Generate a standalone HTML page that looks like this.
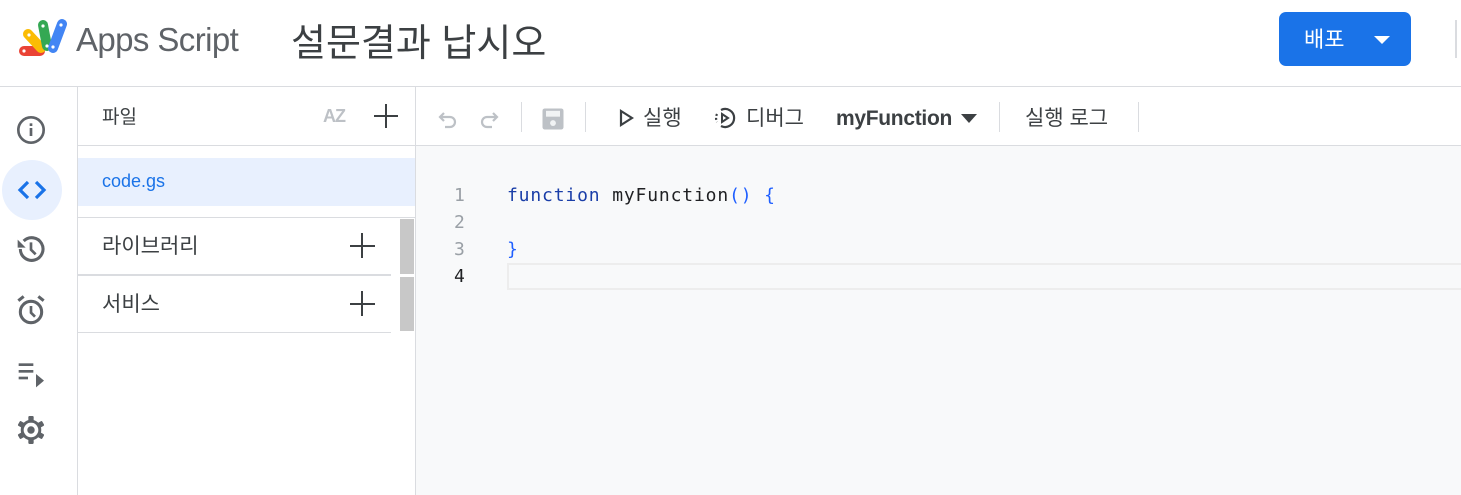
<!DOCTYPE html>
<html><head><meta charset="utf-8"><style>
*{margin:0;padding:0;box-sizing:border-box}
body{width:1461px;height:495px;overflow:hidden;background:#fff;font-family:"Liberation Sans","Noto Sans CJK KR",sans-serif;color:#3c4043;position:relative}
.a{position:absolute}
.k{font-family:"Liberation Sans","Noto Sans CJK KR",sans-serif}
.m{font-family:"DejaVu Sans Mono","Liberation Mono",monospace;font-size:18px;letter-spacing:0.85px}
</style></head><body>
<svg class="a" style="left:18px;top:18px" width="50" height="40" viewBox="0 0 50 40">
<g stroke-linecap="round" stroke-width="10">
<line x1="6" y1="33" x2="22" y2="33" stroke="#ea4335"/>
<line x1="10" y1="16" x2="23" y2="30" stroke="#fbbc04"/>
<line x1="25" y1="7" x2="29" y2="28" stroke="#34a853"/>
<line x1="44" y1="6" x2="35" y2="30" stroke="#4285f4"/>
</g>
<g fill="#fff"><circle cx="6" cy="33" r="1.6"/><circle cx="11" cy="17" r="1.6"/><circle cx="25" cy="8" r="1.6"/><circle cx="43" cy="7" r="1.6"/><circle cx="35" cy="29" r="1.6"/><circle cx="29" cy="28" r="1.6"/></g>
</svg>
<div class="a" style="left:76px;top:21px;font-size:33px;color:#5f6368;letter-spacing:-0.6px">Apps Script</div>
<div class="a k" style="left:291px;top:12px;font-size:38px;color:#3c4043">설문결과 납시오</div>
<div class="a" style="left:1279px;top:12px;width:132px;height:54px;background:#1a73e8;border-radius:7px"></div>
<div class="a k" style="left:1304px;top:22px;font-size:22px;color:#fff">배포</div>
<div class="a" style="left:1374px;top:36px;width:0;height:0;border-left:8px solid transparent;border-right:8px solid transparent;border-top:8px solid #fff"></div>
<div class="a" style="left:1455px;top:20px;width:2px;height:38px;background:#dadce0"></div>
<div class="a" style="left:0;top:86px;width:1461px;height:1px;background:#dadce0"></div>
<div class="a" style="left:77px;top:87px;width:1px;height:408px;background:#dadce0"></div>
<svg class="a" style="left:15px;top:114px" width="32" height="32" viewBox="0 0 24 24"><circle cx="12" cy="12" r="9.5" fill="none" stroke="#5f6368" stroke-width="2"/><rect x="11" y="10.5" width="2" height="6" fill="#5f6368"/><rect x="11" y="7" width="2" height="2" fill="#5f6368"/></svg>
<div class="a" style="left:2px;top:160px;width:60px;height:60px;border-radius:50%;background:#e8f0fe"></div>
<svg class="a" style="left:15px;top:174px" width="34" height="32" viewBox="0 0 24 24"><path d="M9 6 L3 12 L9 18 M15 6 L21 12 L15 18" fill="none" stroke="#1a73e8" stroke-width="2.4"/></svg>
<svg class="a" style="left:15px;top:233px" width="32" height="32" viewBox="0 0 24 24"><path d="M4 12 A8.5 8.5 0 1 0 6.5 6" fill="none" stroke="#5f6368" stroke-width="2.3"/><path d="M2 5 L2 11 L8 11" fill="#5f6368"/><path d="M12 7 V12.5 L15.5 16" fill="none" stroke="#5f6368" stroke-width="2"/></svg>
<svg class="a" style="left:15px;top:294px" width="32" height="32" viewBox="0 0 24 24"><circle cx="12" cy="13.5" r="8" fill="none" stroke="#5f6368" stroke-width="2.3"/><path d="M2.5 5 L6.5 1.8 M21.5 5 L17.5 1.8" stroke="#5f6368" stroke-width="2.3"/><path d="M12 9 V14 L15 17" fill="none" stroke="#5f6368" stroke-width="2"/></svg>
<svg class="a" style="left:15px;top:358px" width="34" height="32" viewBox="0 0 24 24"><rect x="2" y="4" width="11" height="2" fill="#5f6368"/><rect x="2" y="9" width="11" height="2" fill="#5f6368"/><rect x="2" y="14" width="7" height="2" fill="#5f6368"/><path d="M15 12 L21 17 L15 22 Z" fill="#5f6368"/></svg>
<svg class="a" style="left:15px;top:414px" width="32" height="32" viewBox="0 0 24 24"><g fill="#5f6368"><rect x="10" y="1.5" width="4" height="5" rx="0.8"/><rect x="10" y="1.5" width="4" height="5" rx="0.8" transform="rotate(60 12 12)"/><rect x="10" y="1.5" width="4" height="5" rx="0.8" transform="rotate(120 12 12)"/><rect x="10" y="1.5" width="4" height="5" rx="0.8" transform="rotate(180 12 12)"/><rect x="10" y="1.5" width="4" height="5" rx="0.8" transform="rotate(240 12 12)"/><rect x="10" y="1.5" width="4" height="5" rx="0.8" transform="rotate(300 12 12)"/></g><circle cx="12" cy="12" r="6.6" fill="none" stroke="#5f6368" stroke-width="2.2"/><circle cx="12" cy="12" r="2.8" fill="#5f6368"/></svg>
<div class="a k" style="left:102px;top:102px;font-size:19px">파일</div>
<div class="a" style="left:323px;top:106px;font-size:18px;font-weight:bold;color:#bdc1c6;letter-spacing:-1px">AZ</div>
<div class="a" style="left:374px;top:115px;width:24px;height:2.4px;background:#3c4043"></div>
<div class="a" style="left:385px;top:104px;width:2.4px;height:24px;background:#3c4043"></div>
<div class="a" style="left:78px;top:145px;width:337px;height:1px;background:#dadce0"></div>
<div class="a" style="left:78px;top:158px;width:337px;height:48px;background:#e8f0fe"></div>
<div class="a" style="left:102px;top:171px;font-size:18px;color:#1a73e8">code.gs</div>
<div class="a" style="left:78px;top:217px;width:337px;height:1px;background:#dadce0"></div>
<div class="a k" style="left:102px;top:230px;font-size:21px">라이브러리</div>
<div class="a" style="left:350px;top:245px;width:25px;height:2.4px;background:#3c4043"></div>
<div class="a" style="left:361px;top:233px;width:2.4px;height:25px;background:#3c4043"></div>
<div class="a" style="left:78px;top:274px;width:313px;height:2px;background:#dadce0"></div>
<div class="a k" style="left:102px;top:288px;font-size:21px">서비스</div>
<div class="a" style="left:350px;top:303px;width:25px;height:2.4px;background:#3c4043"></div>
<div class="a" style="left:361px;top:291px;width:2.4px;height:25px;background:#3c4043"></div>
<div class="a" style="left:78px;top:332px;width:313px;height:1px;background:#dadce0"></div>
<div class="a" style="left:400px;top:219px;width:14px;height:55px;background:#c8c8c8"></div>
<div class="a" style="left:400px;top:277px;width:14px;height:54px;background:#c8c8c8"></div>
<div class="a" style="left:415px;top:87px;width:1px;height:408px;background:#dadce0"></div>
<div class="a" style="left:416px;top:145px;width:1045px;height:1px;background:#dadce0"></div>
<div class="a" style="left:416px;top:146px;width:1045px;height:349px;background:#f8f9fa"></div>
<svg class="a" style="left:436px;top:106px" width="24" height="24" viewBox="0 0 24 24"><path d="M8 7 L4 11 L8 15 M4 11 H14 A5 5 0 0 1 14 21 H9" fill="none" stroke="#bdc1c6" stroke-width="2.2"/></svg>
<svg class="a" style="left:477px;top:106px" width="24" height="24" viewBox="0 0 24 24"><path d="M16 7 L20 11 L16 15 M20 11 H10 A5 5 0 0 0 10 21 H15" fill="none" stroke="#bdc1c6" stroke-width="2.2"/></svg>
<div class="a" style="left:521px;top:102px;width:1px;height:30px;background:#dadce0"></div>
<svg class="a" style="left:539px;top:105px" width="28" height="28" viewBox="0 0 24 24"><rect x="3" y="3" width="18" height="18" rx="2" fill="#bdc1c6"/><rect x="6" y="5" width="12" height="5" fill="#f1f3f4"/><circle cx="12" cy="15.5" r="2.5" fill="#f1f3f4"/></svg>
<div class="a" style="left:585px;top:102px;width:1px;height:30px;background:#dadce0"></div>
<svg class="a" style="left:618px;top:109px" width="16" height="18" viewBox="0 0 16 18"><path d="M3 2 L14 9 L3 16 Z" fill="none" stroke="#3c4043" stroke-width="2.2"/></svg>
<div class="a k" style="left:643px;top:102px;font-size:21px">실행</div>
<svg class="a" style="left:712px;top:106px" width="26" height="24" viewBox="0 0 24 24"><path d="M8 4 A9 9 0 1 1 8 20" fill="none" stroke="#3c4043" stroke-width="2.2"/><path d="M4 8 A9 9 0 0 0 4 16" fill="none" stroke="#3c4043" stroke-width="2.2" stroke-dasharray="2 2"/><path d="M9 8 L15 12 L9 16 Z" fill="none" stroke="#3c4043" stroke-width="2"/></svg>
<div class="a k" style="left:746px;top:102px;font-size:21px">디버그</div>
<div class="a" style="left:836px;top:107px;font-size:21px;font-weight:bold;color:#3c4043;letter-spacing:-0.3px">myFunction</div>
<div class="a" style="left:961px;top:114px;width:0;height:0;border-left:8px solid transparent;border-right:8px solid transparent;border-top:9px solid #3c4043"></div>
<div class="a" style="left:999px;top:102px;width:1px;height:30px;background:#dadce0"></div>
<div class="a k" style="left:1025px;top:102px;font-size:21px">실행 로그</div>
<div class="a" style="left:1138px;top:102px;width:1px;height:30px;background:#dadce0"></div>
<div class="a" style="left:507px;top:263px;width:954px;height:27px;border:2px solid #ededed;border-right:none"></div>
<div class="a m" style="left:454px;top:185px;color:#9aa0a6">1</div>
<div class="a m" style="left:454px;top:212px;color:#9aa0a6">2</div>
<div class="a m" style="left:454px;top:239px;color:#9aa0a6">3</div>
<div class="a m" style="left:454px;top:266px;color:#202124">4</div>
<div class="a m" style="left:507px;top:185px;white-space:pre"><span style="color:#1a3ea8">function</span> <span style="color:#202124">myFunction</span><span style="color:#1f5fff">() {</span></div>
<div class="a m" style="left:507px;top:239px;color:#1f5fff">}</div>
</body></html>
